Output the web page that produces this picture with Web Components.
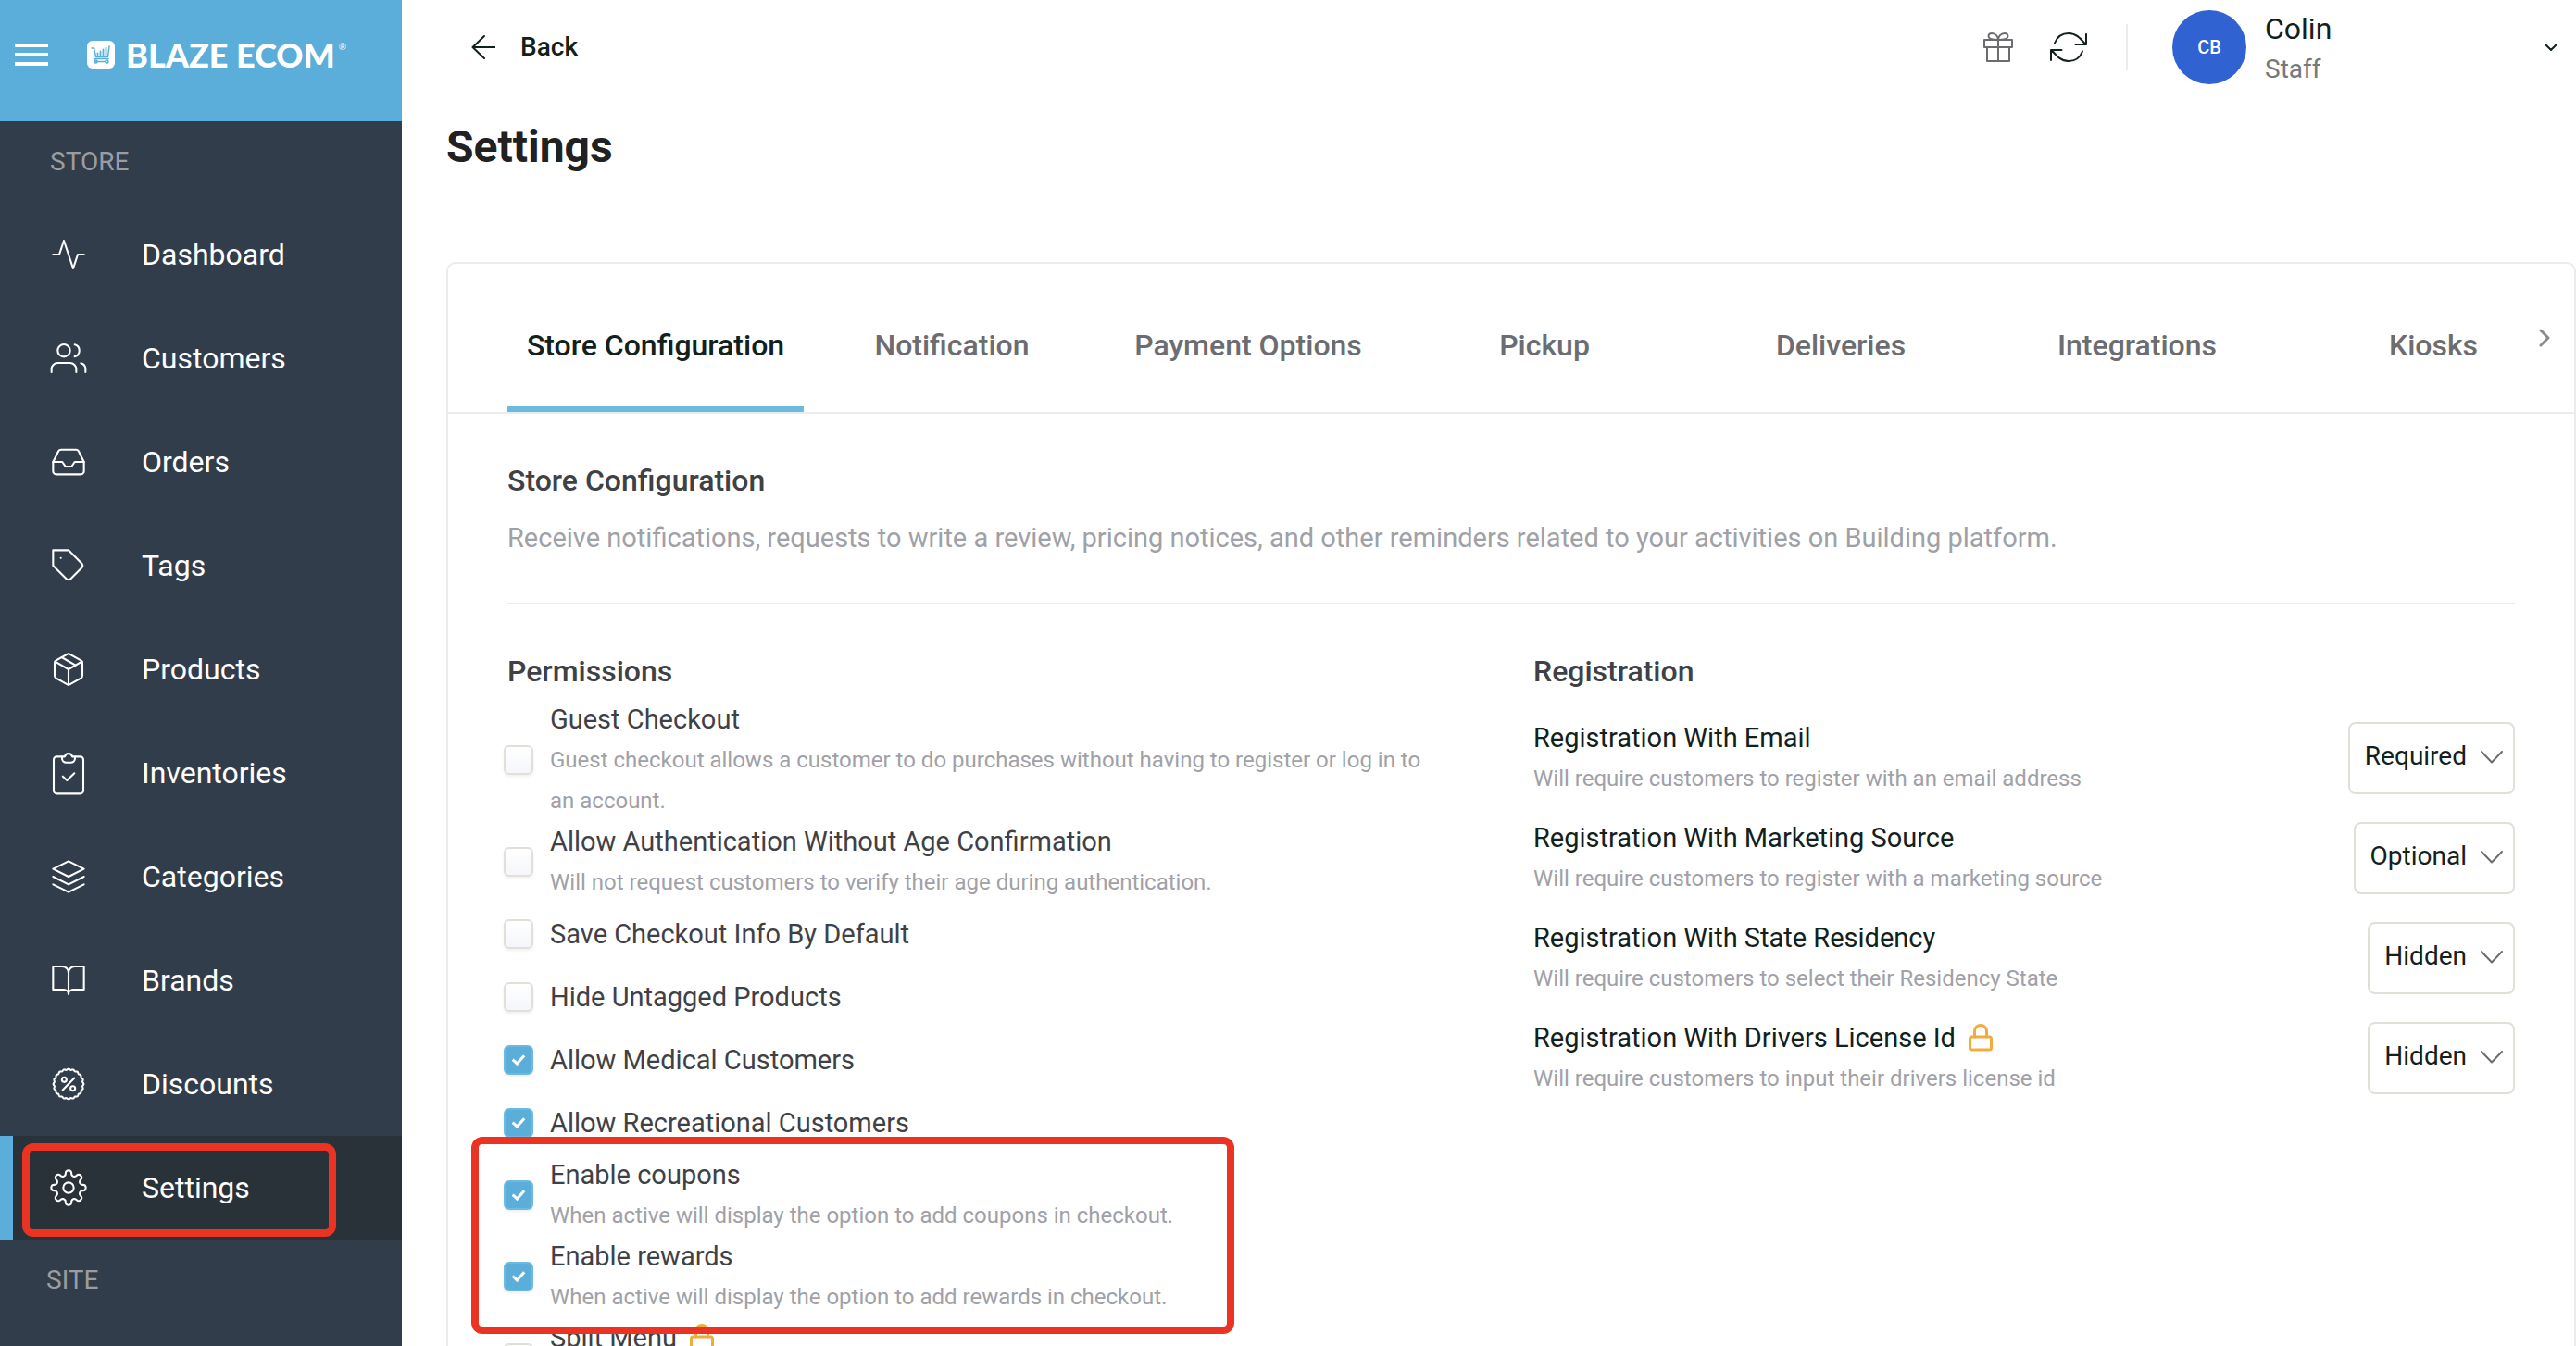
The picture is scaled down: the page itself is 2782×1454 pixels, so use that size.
<!DOCTYPE html>
<html lang="en">
<head>
<meta charset="utf-8">
<meta name="viewport" content="width=device-width, initial-scale=1">
<title>Settings</title>
<style>
  :root {
    --brand: #5aaed9;
    --brand-soft: #6cbadf;
    --side: #323d4b;
    --side-active: #2a3239;
    --ink: #12211b;
    --text: #404145;
    --muted: #a0a1a7;
    --line: #ebebf0;
    --field: #e2dfd9;
    --mark: #ea3323;
  }
  body {
    margin: 0;
    font-family: Roboto, "Liberation Sans", sans-serif;
    font-size: 28px;
    line-height: 44px;
    color: var(--text);
    background: #fff;
  }
</style>
</head>
<body>

<app-shell>
  <side-bar slot="side">
    <nav-group label="STORE" indent="54">
      <nav-item icon="activity">Dashboard</nav-item>
      <nav-item icon="users">Customers</nav-item>
      <nav-item icon="inbox">Orders</nav-item>
      <nav-item icon="tag">Tags</nav-item>
      <nav-item icon="package">Products</nav-item>
      <nav-item icon="clipboard">Inventories</nav-item>
      <nav-item icon="layers">Categories</nav-item>
      <nav-item icon="book">Brands</nav-item>
      <nav-item icon="discount">Discounts</nav-item>
      <nav-item icon="gear" active marked>Settings</nav-item>
    </nav-group>
    <nav-group label="SITE" indent="50"></nav-group>
  </side-bar>

  <top-bar>
    <user-chip initials="CB" name="Colin" role-name="Staff"></user-chip>
  </top-bar>
  <page-title>Settings</page-title>

  <settings-card>
    <tab-strip slot="tabs" tabs='["Store Configuration","Notification","Payment Options","Pickup","Deliveries","Integrations","Kiosks"]'></tab-strip>
    <span slot="title">Store Configuration</span>
    <span slot="intro">Receive notifications, requests to write a review, pricing notices, and other reminders related to your activities on Building platform.</span>

    <option-list slot="left" heading="Permissions">
      <check-option note="Guest checkout allows a customer to do purchases without having to register or log in to an account.">Guest Checkout</check-option>
      <check-option note="Will not request customers to verify their age during authentication.">Allow Authentication Without Age Confirmation</check-option>
      <check-option>Save Checkout Info By Default</check-option>
      <check-option>Hide Untagged Products</check-option>
      <check-option checked>Allow Medical Customers</check-option>
      <check-option checked>Allow Recreational Customers</check-option>
      <mark-box>
        <check-option checked note="When active will display the option to add coupons in checkout.">Enable coupons</check-option>
        <check-option checked note="When active will display the option to add rewards in checkout.">Enable rewards</check-option>
      </mark-box>
      <check-option locked note="Will split the menu by customer type.">Split Menu</check-option>
    </option-list>

    <choice-list slot="right" heading="Registration">
      <choice-row value="Required" note="Will require customers to register with an email address">Registration With Email</choice-row>
      <choice-row value="Optional" note="Will require customers to register with a marketing source">Registration With Marketing Source</choice-row>
      <choice-row value="Hidden" note="Will require customers to select their Residency State">Registration With State Residency</choice-row>
      <choice-row value="Hidden" locked note="Will require customers to input their drivers license id">Registration With Drivers License Id</choice-row>
    </choice-list>
  </settings-card>
</app-shell>

<script>
/* ---------- Icons ---------- */

// closed outline whose radius swings n times round the circle; lean > 0 makes the bumps rounder
function wavy(n, r, amp, lean = 0) {
  const pts = [];
  const steps = n * 16;
  for (let i = 0; i < steps; i++) {
    const a = (i / steps) * Math.PI * 2;
    const rad = r + amp * Math.cos(n * a);
    const t = a + lean * Math.sin(2 * n * a);
    pts.push(`${(12 + rad * Math.sin(t)).toFixed(2)} ${(12 - rad * Math.cos(t)).toFixed(2)}`);
  }
  return `M${pts.join('L')}Z`;
}

const ICONS = {
  activity: { body: '<path d="M22 12h-4l-3 9L9 3l-3 9H2"/>' },
  users: { body: '<path d="M17 21v-2a4 4 0 0 0-4-4H5a4 4 0 0 0-4 4v2"/><circle cx="9" cy="7" r="4"/><path d="M23 21v-2a4 4 0 0 0-3-3.87M16 3.13a4 4 0 0 1 0 7.75"/>' },
  inbox: { body: '<path d="M22 12h-6l-2 3h-4l-2-3H2"/><path d="M5.45 5.11L2 12v6a2 2 0 0 0 2 2h16a2 2 0 0 0 2-2v-6l-3.45-6.89A2 2 0 0 0 16.76 4H7.24a2 2 0 0 0-1.79 1.11z"/>' },
  tag: { body: '<path d="M20.59 13.41l-7.17 7.17a2 2 0 0 1-2.83 0L2 12V2h10l8.59 8.59a2 2 0 0 1 0 2.82z"/><path d="M7 7h.01"/>' },
  package: { body: '<path d="M16.5 9.4l-9-5.19"/><path d="M21 16V8a2 2 0 0 0-1-1.73l-7-4a2 2 0 0 0-2 0l-7 4A2 2 0 0 0 3 8v8a2 2 0 0 0 1 1.73l7 4a2 2 0 0 0 2 0l7-4A2 2 0 0 0 21 16z"/><path d="M3.27 6.96L12 12.01l8.73-5.05M12 22.08V12"/>' },
  clipboard: { h: 48, box: '0 0 24 28.8', body: '<path d="M7.6 3.8H4.4A2 2 0 0 0 2.4 5.8v20a2 2 0 0 0 2 2h15.2a2 2 0 0 0 2-2v-20a2 2 0 0 0-2-2h-3.2"/><path d="M9.6 3.8c.3-1.3 1.2-2 2.4-2s2.1.7 2.4 2h1.8v1.2a2.6 2.6 0 0 1-2.6 2.6h-3.2a2.6 2.6 0 0 1-2.6-2.6V3.8z"/><path d="M8.3 16.6l2.7 2.6 4.8-4.6"/>' },
  layers: { body: '<path d="M12 2L2 7l10 5 10-5-10-5zM2 17l10 5 10-5M2 12l10 5 10-5"/>' },
  book: { body: '<path d="M2 3h6a4 4 0 0 1 4 4v14a3 3 0 0 0-3-3H2zM22 3h-6a4 4 0 0 0-4 4v14a3 3 0 0 1 3-3h7z"/>' },
  discount: { body: `<path d="${wavy(20, 9.5, .3)}"/><path d="M8.2 15.9l7.6-7.8"/><circle cx="9.2" cy="9.2" r="1.5"/><circle cx="14.8" cy="14.8" r="1.5"/>` },
  gear: { body: `<path d="${wavy(8, 9.6, 1.6, .04)}"/><circle cx="12" cy="12" r="3.4"/>` },
  menu: { w: 36, h: 24, box: '0 0 36 24', body: '<path fill="currentColor" stroke="none" d="M0 0h36v4H0zM0 10h36v4H0zM0 20h36v4H0z"/>' },
  arrow: { w: 26, h: 26, box: '0 0 26 26', sw: 2, body: '<path d="M14 1L1.5 13 14 25M1.5 13H26"/>' },
  gift: { w: 32, h: 32, box: '0 0 32 32', sw: 2, body: '<path d="M1 8h30v8H1zM4 16v15h24V16M16 8v23"/><path d="M16 8C13 8 5.5 8 5.5 4.3 5.5 2.3 7 1 9.2 1 13 1 16 4.5 16 8c0-3.5 3-7 6.8-7 2.2 0 3.7 1.3 3.7 3.3C26.5 8 19 8 16 8z"/>' },
  refresh: { w: 40, h: 32, box: '0 0 40 32', sw: 2, body: '<path d="M5 11.5C7.5 5 13 1 20 1c8 0 12.5 5 18.5 12M39 2v11H27.5"/><path d="M35 20.5C32.5 27 27 31 20 31c-8 0-12.5-5-18.5-12M1 30V19h11.5"/>' },
  down: { w: 14, h: 8, box: '0 0 14 8', sw: 2, body: '<path d="M1 1l6 6 6-6"/>' },
  caret: { w: 24, h: 14, box: '0 0 24 14', sw: 2, body: '<path d="M1 1l11 11.5L23 1"/>' },
  next: { w: 12, h: 20, box: '0 0 12 20', sw: 3, body: '<path d="M2 2l8 8-8 8"/>' },
  lock: { w: 26, h: 30, box: '0 0 26 30', sw: 3, body: '<rect x="1.5" y="14" width="23" height="14" rx="2"/><path d="M6.5 14V8a6.5 6.5 0 0 1 13 0v6"/>' },
  logo: { w: 30, h: 30, box: '0 0 30 30', body: '<rect width="30" height="30" rx="6" fill="#fff" stroke="none"/><g stroke="#5aaed9" stroke-width="1.5"><path d="M5 8h2.500l2 9.500h13L24 6"/><path d="M11.500 15.500v-2M14.500 15.500v-4M17.500 15.500V9.500M20.500 15.500V7.500" stroke-width="1.800"/><path d="M23 19.500H7.500M9.500 22.500h11"/><circle cx="9.500" cy="22.500" r="1.500"/><circle cx="21.500" cy="22.500" r="1.500"/></g>' }
};

/* Small base: every element draws its own shadow root once it is connected */
class BaseElement extends HTMLElement {
  constructor() {
    super();
    this.attachShadow({ mode: 'open' });
  }
  connectedCallback() {
    this.shadowRoot.innerHTML = this.template();
    if (this.bindEvents) this.bindEvents();
  }
  attr(name) { return this.getAttribute(name) || ''; }
}

class AppIcon extends BaseElement {
  template() {
    const i = ICONS[this.attr('name')];
    return `
      <style>
        :host { display: inline-flex; flex: none; }
        svg { display: block; }
      </style>
      <svg width="${i.w || 40}" height="${i.h || 40}" viewBox="${i.box || '0 0 24 24'}" fill="none" stroke="currentColor"
        stroke-width="${i.sw || 1.25}" stroke-linecap="round" stroke-linejoin="round" aria-hidden="true">${i.body}</svg>
    `;
  }
}

/* ---------- Frame ---------- */
class AppShell extends BaseElement {
  template() {
    return `
      <style>
        :host { display: grid; grid-template-columns: 434px minmax(0, 1fr); height: 100vh; overflow: hidden; }
        aside { background: var(--side); overflow: hidden; }
        main { padding-left: 48px; overflow: hidden; }
      </style>
      <aside><slot name="side"></slot></aside>
      <main><slot></slot></main>
    `;
  }
}

class SideBar extends BaseElement {
  template() {
    return `
      <style>
        :host { display: block; color: #fff; }
        header { display: flex; align-items: flex-start; height: 87px; padding: 44px 16px 0; background: var(--brand); }
        button { display: flex; margin: 0; padding: 3px 0; border: 0; background: none; color: inherit; cursor: pointer; }
        a { display: flex; gap: 12px; margin-left: 42px; color: inherit; text-decoration: none; }
        b { font: 900 36px/30px Lato, sans-serif; white-space: nowrap; }
        sup { font: 400 10px/12px Lato, sans-serif; margin-left: -8px; }
      </style>
      <header>
        <button type="button" aria-label="Toggle menu"><app-icon name="menu"></app-icon></button>
        <a href="#"><app-icon name="logo"></app-icon><b>BLAZE ECOM</b><sup>®</sup></a>
      </header>
      <nav><slot></slot></nav>
    `;
  }
}

class NavGroup extends BaseElement {
  template() {
    return `
      <style>
        :host { display: block; }
        h2 { margin: 0; padding-left: ${this.attr('indent')}px; font-size: 28px; font-weight: 400; line-height: 88px; color: #9b9ca1; }
      </style>
      <h2>${this.attr('label')}</h2>
      <slot></slot>
    `;
  }
}

class NavItem extends BaseElement {
  template() {
    return `
      <style>
        :host { display: block; position: relative; }
        a {
          display: flex; align-items: center; gap: 59px; box-sizing: border-box; height: 112px;
          padding-left: 40px; border-left: 14px solid transparent;
          color: #fff; font-size: 32px; text-decoration: none;
        }
        :host([active]) a { background: var(--side-active); border-color: var(--brand); }
        :host([marked])::after {
          content: ""; position: absolute; top: 8px; bottom: 3px; left: 24px; right: 71px;
          border: 8px solid var(--mark); border-radius: 12px; pointer-events: none;
        }
      </style>
      <a href="#"><app-icon name="${this.attr('icon')}"></app-icon><span><slot></slot></span></a>
    `;
  }
}

class TopBar extends BaseElement {
  template() {
    return `
      <style>
        :host { display: flex; align-items: center; height: 102px; padding: 0 20px 0 27px; color: var(--ink); }
        a { display: flex; align-items: center; gap: 27px; color: inherit; font-weight: 500; text-decoration: none; }
        .tools { display: flex; align-items: center; gap: 40px; margin-left: auto; }
        button { display: flex; margin: 0; padding: 0; border: 0; background: none; color: inherit; cursor: pointer; }
        button.gift { color: #6c6c70; }
        i { width: 2px; height: 50px; margin: 0 8px 0 2px; background: var(--line); }
      </style>
      <a href="#"><app-icon name="arrow"></app-icon>Back</a>
      <div class="tools">
        <button type="button" class="gift" aria-label="What's new"><app-icon name="gift"></app-icon></button>
        <button type="button" aria-label="Refresh"><app-icon name="refresh"></app-icon></button>
        <i></i>
        <slot></slot>
      </div>
    `;
  }
}

class UserChip extends BaseElement {
  template() {
    return `
      <style>
        :host { display: block; width: 416px; }
        button {
          display: flex; align-items: center; gap: 20px; width: 100%; margin: 0; padding: 0; border: 0;
          background: none; color: var(--ink); font: inherit; text-align: left; cursor: pointer;
        }
        .avatar {
          display: grid; place-items: center; width: 80px; height: 80px; border-radius: 50%;
          background: #3062d2; color: #fff; font-size: 20px; font-weight: 500;
        }
        .who { display: grid; flex: 1; padding-top: 4px; }
        .name { font-size: 32px; }
        .role { color: #77787b; }
      </style>
      <button type="button">
        <span class="avatar">${this.attr('initials')}</span>
        <span class="who">
          <span class="name">${this.attr('name')}</span>
          <span class="role">${this.attr('role-name')}</span>
        </span>
        <app-icon name="down"></app-icon>
      </button>
    `;
  }
}

class PageTitle extends BaseElement {
  template() {
    return `
      <style>
        :host { display: block; padding: 29px 0 96px; }
        h1 { margin: 0; font-size: 48px; font-weight: 700; line-height: 56px; color: #212121; }
      </style>
      <h1><slot></slot></h1>
    `;
  }
}

/* ---------- Card ---------- */
class SettingsCard extends BaseElement {
  template() {
    return `
      <style>
        :host { display: block; border: 2px solid var(--line); border-radius: 10px; }
        .body { padding: 50px 64px; }
        h2 { margin: 0 0 18px; font-size: 32px; font-weight: 500; line-height: 44px; }
        p { margin: 0; padding-bottom: 48px; border-bottom: 2px solid var(--line); font-size: 29px; color: var(--muted); }
        .cols { display: grid; grid-template-columns: minmax(0, 1fr) minmax(0, 1fr); gap: 48px; padding-top: 50px; }
      </style>
      <slot name="tabs"></slot>
      <div class="body">
        <h2><slot name="title"></slot></h2>
        <p><slot name="intro"></slot></p>
        <div class="cols">
          <slot name="left"></slot>
          <slot name="right"></slot>
        </div>
      </div>
    `;
  }
}

class TabStrip extends BaseElement {
  template() {
    const tabs = JSON.parse(this.attr('tabs'));
    return `
      <style>
        :host { display: flex; height: 160px; padding-left: 64px; border-bottom: 2px solid var(--line); }
        .list { display: flex; flex: 1; min-width: 0; overflow: hidden; }
        button {
          flex: none; box-sizing: border-box; margin: 0; border: 0; background: none; cursor: pointer;
          font: inherit; font-weight: 500; color: #6c6d71;
        }
        .list button { width: 320px; padding: 22px 0 0; border-bottom: 6px solid transparent; font-size: 32px; white-space: nowrap; }
        .list button[aria-selected="true"] { color: var(--ink); border-color: var(--brand-soft); }
        .next { display: flex; align-items: center; width: 64px; padding: 0 0 0 26px; color: #8b8b8b; }
      </style>
      <div class="list" role="tablist">
        ${tabs.map((t, i) => `<button type="button" role="tab" aria-selected="${i === 0}">${t}</button>`).join('')}
      </div>
      <button type="button" class="next" aria-label="More tabs"><app-icon name="next"></app-icon></button>
    `;
  }
  bindEvents() {
    const tabs = this.shadowRoot.querySelectorAll('[role="tab"]');
    tabs.forEach(tab => tab.addEventListener('click', () => {
      tabs.forEach(t => t.setAttribute('aria-selected', String(t === tab)));
    }));
  }
}

class OptionList extends BaseElement {
  template() {
    return `
      <style>
        :host { display: block; }
        h3 { margin: 0 0 8px; font-size: 32px; font-weight: 500; line-height: 44px; }
        div { margin-left: -4px; padding-right: 56px; }
      </style>
      <h3>${this.attr('heading')}</h3>
      <div><slot></slot></div>
    `;
  }
}

class CheckOption extends BaseElement {
  template() {
    const note = this.attr('note');
    return `
      <style>
        :host { display: block; }
        label { display: flex; align-items: center; gap: 18px; padding: ${note ? 0 : 12}px 0; cursor: pointer; }
        input {
          appearance: none; display: grid; place-items: center; flex: none; width: 32px; height: 32px; margin: 0;
          border: 2px solid var(--field); border-radius: 6px;
          background: linear-gradient(#fff, #f5f6fa); box-shadow: 0 2px 3px rgba(60, 60, 80, .08);
        }
        input:checked { border-color: var(--brand-soft); background: var(--brand); }
        input:checked::after {
          content: ""; width: 5px; height: 10px; margin-bottom: 4px;
          border: solid #fff; border-width: 0 3px 3px 0; transform: rotate(42deg);
        }
        .text { display: grid; }
        .name { display: flex; align-items: center; gap: 14px; font-size: 29px; }
        small { font-size: 24px; color: var(--muted); }
        app-icon { color: #efac3f; }
      </style>
      <label>
        <input type="checkbox" ${this.hasAttribute('checked') ? 'checked' : ''}>
        <span class="text">
          <span class="name"><slot></slot>${this.hasAttribute('locked') ? '<app-icon name="lock"></app-icon>' : ''}</span>
          ${note ? `<small>${note}</small>` : ''}
        </span>
      </label>
    `;
  }
}

/* red frame laid over whatever it wraps */
class MarkBox extends BaseElement {
  template() {
    return `
      <style>
        :host { display: block; position: relative; width: fit-content; z-index: 1; }
        :host::after {
          content: ""; position: absolute; top: -19px; bottom: -18px; left: -35px; right: -66px;
          border: 8px solid var(--mark); border-radius: 12px; pointer-events: none;
        }
      </style>
      <slot></slot>
    `;
  }
}

class ChoiceList extends BaseElement {
  template() {
    return `
      <style>
        :host { display: block; }
        h3 { margin: 0 0 28px; font-size: 32px; font-weight: 500; line-height: 44px; }
        div { display: grid; gap: 20px; }
      </style>
      <h3>${this.attr('heading')}</h3>
      <div><slot></slot></div>
    `;
  }
}

class ChoiceRow extends BaseElement {
  template() {
    const value = this.attr('value');
    const options = ['Required', 'Optional', 'Hidden'];
    return `
      <style>
        :host { display: flex; align-items: center; justify-content: space-between; }
        .text { display: grid; }
        label { display: flex; align-items: center; gap: 14px; font-size: 29px; color: var(--ink); }
        label app-icon { color: #efac3f; }
        small { font-size: 24px; color: var(--muted); }
        .field { display: grid; align-items: center; color: #6c6d71; }
        .field > * { grid-area: 1 / 1; }
        .field app-icon { justify-self: end; margin: 0 13px 2px 0; pointer-events: none; }
        select {
          appearance: none; field-sizing: content; box-sizing: border-box; height: 78px; margin: 0;
          padding: 0 50px 4px 16px; border: 2px solid var(--field); border-radius: 8px;
          background: #fff; color: var(--ink); font: inherit; cursor: pointer;
        }
      </style>
      <div class="text">
        <label for="choice"><slot></slot>${this.hasAttribute('locked') ? '<app-icon name="lock"></app-icon>' : ''}</label>
        <small>${this.attr('note')}</small>
      </div>
      <div class="field">
        <select id="choice">
          ${options.map(o => `<option ${o === value ? 'selected' : ''}>${o}</option>`).join('')}
        </select>
        <app-icon name="caret"></app-icon>
      </div>
    `;
  }
}

customElements.define('app-icon', AppIcon);
customElements.define('app-shell', AppShell);
customElements.define('side-bar', SideBar);
customElements.define('nav-group', NavGroup);
customElements.define('nav-item', NavItem);
customElements.define('top-bar', TopBar);
customElements.define('user-chip', UserChip);
customElements.define('page-title', PageTitle);
customElements.define('settings-card', SettingsCard);
customElements.define('tab-strip', TabStrip);
customElements.define('option-list', OptionList);
customElements.define('check-option', CheckOption);
customElements.define('mark-box', MarkBox);
customElements.define('choice-list', ChoiceList);
customElements.define('choice-row', ChoiceRow);
</script>
</body>
</html>
